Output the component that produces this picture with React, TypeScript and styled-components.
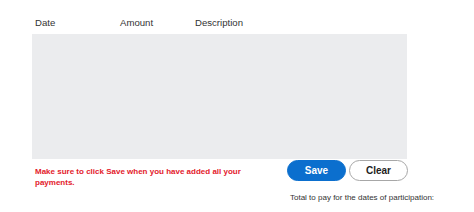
import React from 'react';
import styled, { createGlobalStyle } from 'styled-components';

const GlobalStyle = createGlobalStyle`
  html, body {
    margin: 0;
    padding: 0;
    background: #ffffff;
    font-family: "Liberation Sans", Arial, Helvetica, sans-serif;
  }
`;

const Page = styled.div`
  width: 474px;
  height: 212px;
  overflow: hidden;
  position: relative;
`;

const Intro = styled.p`
  margin: -11px 0 0 0;
  padding-left: 35px;
  font-size: 10px;
  line-height: 12px;
  color: #999;
  white-space: nowrap;
`;

const Panel = styled.div`
  margin-left: 32px;
  width: 375px;
`;

const HeaderRow = styled.div`
  display: grid;
  grid-template-columns: 85px 75px 1fr;
  padding: 16px 0 0 3px;
  height: 17px;
  font-size: 9.6px;
  line-height: 12px;
  color: #333;
`;

const Entries = styled.div`
  height: 125px;
  background: #ebecee;
`;

const Footer = styled.div`
  display: flex;
  justify-content: space-between;
  align-items: flex-start;
  margin-top: 1px;
`;

const Warning = styled.div`
  padding: 7px 0 0 3px;
  width: 215px;
  font-size: 8px;
  font-weight: bold;
  line-height: 10.5px;
  color: #e3202b;
`;

const Actions = styled.div`
  display: flex;
  flex-direction: column;
  align-items: flex-start;
  width: 120px;
`;

const Buttons = styled.div`
  display: flex;
  gap: 3px;
`;

const Button = styled.button<{ $primary?: boolean }>`
  width: 59px;
  height: 21px;
  border-radius: 11px;
  font-family: inherit;
  font-size: 10px;
  font-weight: bold;
  padding: 0;
  cursor: pointer;
  border: 1px solid ${p => (p.$primary ? '#0b6fce' : '#a7a7a7')};
  background: ${p => (p.$primary ? '#0b6fce' : '#ffffff')};
  color: ${p => (p.$primary ? '#ffffff' : '#222')};
`;

const Total = styled.div`
  margin: 12px 0 0 3px;
  font-size: 8px;
  line-height: 10px;
  color: #333;
  white-space: nowrap;
`;

export default function App() {
  return (
    <Page>
      <GlobalStyle />
      <Intro>
        Enter your payments by typing the date, amount and description of every payment, one per row.
      </Intro>
      <Panel>
        <HeaderRow>
          <span>Date</span>
          <span>Amount</span>
          <span>Description</span>
        </HeaderRow>
        <Entries />
        <Footer>
          <Warning>Make sure to click Save when you have added all your payments.</Warning>
          <Actions>
            <Buttons>
              <Button $primary>Save</Button>
              <Button>Clear</Button>
            </Buttons>
            <Total>Total to pay for the dates of participation:</Total>
          </Actions>
        </Footer>
      </Panel>
    </Page>
  );
}
